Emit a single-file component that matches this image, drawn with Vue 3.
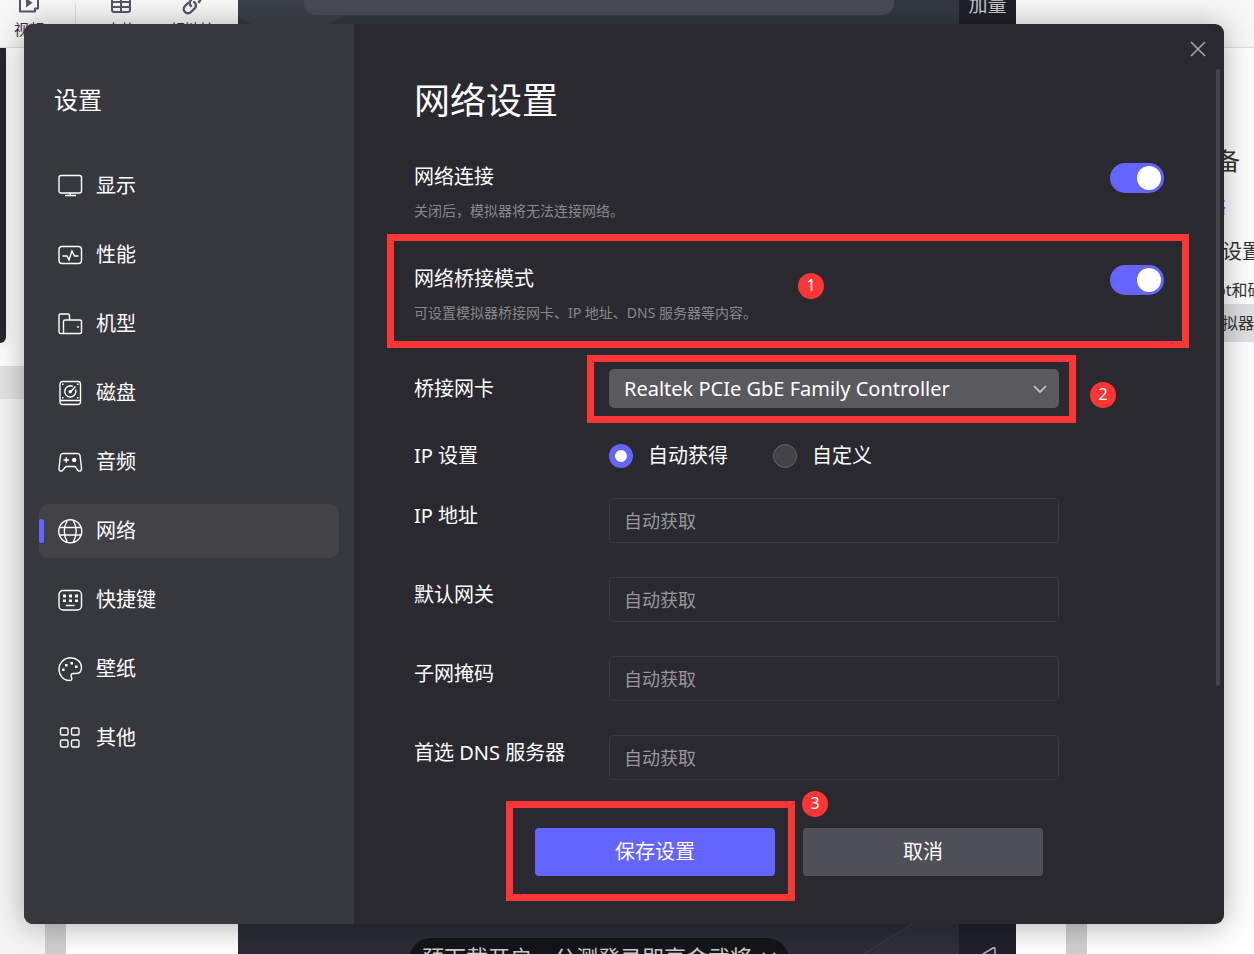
<template>
  <div class="desktop">
    <div class="backdrop" aria-hidden="true">
      <div class="toolbar">
        <div class="tool tool-video">
          <svg width="24" height="24" viewBox="0 0 24 24" fill="none" stroke="#55566a" stroke-width="2">
            <path d="M6 3H3v17.500h15v-3h3V7h-3V3" stroke-linejoin="round" />
            <path d="M9 7v9.500l6.500-4.700z" fill="#55566a" stroke="none" />
          </svg>
          <span>视频</span>
        </div>
        <div class="tool tool-table">
          <svg width="24" height="24" viewBox="0 0 24 24" fill="none" stroke="#55566a" stroke-width="2">
            <rect x="3" y="3" width="18" height="18" rx="2" />
            <path d="M3 11h18M3 16h18M12 8v13M3 8h18" />
          </svg>
          <span>表格</span>
        </div>
        <div class="tool tool-link">
          <svg width="24" height="24" viewBox="0 0 24 24" fill="none" stroke="#55566a" stroke-width="2.400" stroke-linecap="round">
            <path d="M7 12l-3 3a4 4 0 0 0 6 6l4-4a4 4 0 0 0-1-6" />
            <path d="M10 15a4 4 0 0 1 0-6M18 11l2-3" />
          </svg>
          <span>超链接</span>
        </div>
      </div>
      <div class="thumb"></div>
      <div class="band"></div>
      <div class="gutter"></div>
      <div class="page"></div>
      <div class="emulator">
        <div class="screen">
          <svg class="rays" viewBox="0 0 721 954" preserveAspectRatio="none">
            <path d="M0 16 14 24H92L132 0H0z" fill="#3c404a" />
            <path d="M628 954 674 924H721V954z" fill="#2d3038" />
            <path d="M626 954 674 924" stroke="#3b3f48" />
          </svg>
          <div class="search"></div>
          <div class="notice">预下载开启，公测登录即享金武将
            <svg width="14" height="10" viewBox="0 0 14 10" fill="none" stroke="#ccc" stroke-width="2"><path d="M1 2l6 6 6-6" /></svg>
          </div>
        </div>
        <div class="rail">
          <span>加量</span>
          <svg width="24" height="24" viewBox="0 0 24 24" fill="none" stroke="#b9b5cf" stroke-width="1.500" stroke-linejoin="round">
            <path d="M2 11 17 2q2-1 2 1v18l-6-5z" />
          </svg>
        </div>
      </div>
      <div class="divider"></div>
      <div class="outline">
        <p class="outline-title">设备</p>
        <p class="outline-link">络</p>
        <p class="outline-head">设置</p>
        <p class="outline-item">root和硬件</p>
        <p class="outline-item current">模拟器</p>
      </div>
    </div>

    <div class="dialog" role="dialog" aria-label="设置">
      <aside class="sidebar">
        <h2 class="sidebar-title">设置</h2>
        <nav class="menu">
          <button
            v-for="item in menu"
            :key="item.name"
            type="button"
            class="menu-item"
            :class="{ active: item.name === current }"
            @click="current = item.name"
          >
            <svg class="menu-icon" viewBox="0 0 24 24">
              <path :d="item.line" />
              <path v-if="item.dots" class="dots" :d="item.dots" />
            </svg>
            <span>{{ item.name }}</span>
          </button>
        </nav>
      </aside>

      <main class="content">
        <button type="button" class="close" aria-label="关闭">
          <svg width="16" height="16" viewBox="0 0 16 16" fill="none" stroke="#a9a6bb" stroke-width="1.500">
            <path d="M1 1l14 14M15 1L1 15" />
          </svg>
        </button>
        <div class="scrollbar"></div>

        <h1 class="page-title">网络设置</h1>

        <div class="switch-row">
          <div>
            <label for="connect" class="label">网络连接</label>
            <p class="hint">关闭后，模拟器将无法连接网络。</p>
          </div>
          <input id="connect" v-model="connect" type="checkbox" role="switch" class="switch" />
        </div>

        <div class="switch-row">
          <div>
            <label for="bridge" class="label">网络桥接模式</label>
            <p class="hint">可设置模拟器桥接网卡、IP 地址、DNS 服务器等内容。</p>
          </div>
          <input id="bridge" v-model="bridge" type="checkbox" role="switch" class="switch" />
          <div class="mark mark-bridge"></div>
          <span class="step step-bridge">1</span>
        </div>

        <form class="form" @submit.prevent>
          <div class="field field-adapter">
            <label for="adapter" class="label">桥接网卡</label>
            <div class="select-wrap">
              <select id="adapter" v-model="adapter" class="select">
                <option>Realtek PCIe GbE Family Controller</option>
              </select>
              <svg class="arrow" width="14" height="10" viewBox="0 0 14 10" fill="none" stroke="#c8c8cc" stroke-width="1.600">
                <path d="M1 2l6 6 6-6" />
              </svg>
              <div class="mark mark-adapter"></div>
              <span class="step step-adapter">2</span>
            </div>
          </div>

          <div class="field field-mode" role="radiogroup" aria-labelledby="mode-label">
            <span id="mode-label" class="label">IP 设置</span>
            <div class="radios">
              <label class="radio"><input v-model="mode" type="radio" name="mode" value="auto" />自动获得</label>
              <label class="radio"><input v-model="mode" type="radio" name="mode" value="custom" />自定义</label>
            </div>
          </div>

          <div v-for="field in fields" :key="field.id" class="field">
            <label :for="field.id" class="label">{{ field.label }}</label>
            <input :id="field.id" v-model="field.value" type="text" class="text-input" placeholder="自动获取" />
          </div>

          <div class="actions">
            <div class="save-wrap">
              <button type="submit" class="button primary">保存设置</button>
              <div class="mark mark-save"></div>
              <span class="step step-save">3</span>
            </div>
            <button type="button" class="button">取消</button>
          </div>
        </form>
      </main>
    </div>
  </div>
</template>

<script setup>
import { ref } from 'vue'

const current = ref('网络')
const connect = ref(true)
const bridge = ref(true)
const adapter = ref('Realtek PCIe GbE Family Controller')
const mode = ref('auto')

const fields = ref([
  { id: 'ip', label: 'IP 地址', value: '' },
  { id: 'gateway', label: '默认网关', value: '' },
  { id: 'mask', label: '子网掩码', value: '' },
  { id: 'dns', label: '首选 DNS 服务器', value: '' }
])

const menu = [
  {
    name: '显示',
    line: 'M3 1.500h18.500a2 2 0 0 1 2 2V17a2 2 0 0 1-2 2H3a2 2 0 0 1-2-2V3.500a2 2 0 0 1 2-2zM12.250 19v2.500M7 21.500h11'
  },
  {
    name: '性能',
    line: 'M4 3.500h16.500a3 3 0 0 1 3 3v11a3 3 0 0 1-3 3H4a3 3 0 0 1-3-3v-11a3 3 0 0 1 3-3zM4.500 13H9l2 4L14 8l2.500 5h4'
  },
  {
    name: '机型',
    line: 'M5.500 21.500H2.500a1.500 1.500 0 0 1-1.500-1.500V3.500A1.500 1.500 0 0 1 2.500 2H10a1.500 1.500 0 0 1 1.500 1.500V8M7 8H22a1.500 1.500 0 0 1 1.500 1.500V20a1.500 1.500 0 0 1-1.500 1.500H5.500V9.500A1.500 1.500 0 0 1 7 8M20 14v2'
  },
  {
    name: '磁盘',
    line: 'M4.500 .5h15.500a2.500 2.500 0 0 1 2.500 2.500v18a2.500 2.500 0 0 1-2.500 2.500H4.500A2.500 2.500 0 0 1 2 21v-18A2.500 2.500 0 0 1 4.500 .5zM2 19.500h20.500M15 5.500a5.600 5.600 0 1 0 2.600 3M12 11.500l5.500-6',
    dots: 'M4 2.500h1.500v1.500H4zM19 2.500h1.500v1.500H19zM4 16h1.500v1.500H4zM19 16h1.500v1.500H19zM10.500 10.800a1.700 1.700 0 1 0 3.400 0a1.700 1.700 0 1 0-3.400 0z'
  },
  {
    name: '音频',
    line: 'M5 3.500h14.500a2.500 2.500 0 0 1 2.500 2L23.500 18c.300 4-3 3.500-4 2l-1.500-2.500a2 2 0 0 0-2-1H9a2 2 0 0 0-2 1L5 20c-1 1.500-4.300 2-4-2L2.500 5.500a2.500 2.500 0 0 1 2.500-2zM5.500 10h5.500M8.250 7.250v5.500',
    dots: 'M14 10a2.200 2.200 0 1 0 4.400 0a2.200 2.200 0 1 0-4.400 0z'
  },
  {
    name: '网络',
    line: 'M12.250 .75a11.500 11.500 0 1 0 0 23a11.500 11.500 0 1 0 0-23zM9.500 1C5.500 8 5.500 16.500 9.500 23.500M15 1c4 7 4 15.500 0 22.500M2 8.500h20.500M2 16h20.500'
  },
  {
    name: '快捷键',
    line: 'M5 2.500h14.500a4 4 0 0 1 4 4V18a4 4 0 0 1-4 4H5a4 4 0 0 1-4-4V6.500a4 4 0 0 1 4-4zM8 17.500h8.500',
    dots: 'M5 6.500h3v3H5zM11 6.500h3v3h-3zM17 6.500h3v3h-3zM5 11.500h3v2.500H5zM11 11.500h3v2.500h-3zM17 11.500h3v2.500h-3z'
  },
  {
    name: '壁纸',
    line: 'M12.500 .75C18.500 .75 23.500 5 23.500 10.500c0 5-3 6-5.500 6h-3c-2 0-2.500 2-1.500 4c1 1.500 0 3-2 3C5 23.500 1 18 1 12.500C1 6 6 .75 12.500 .75z',
    dots: 'M4 11.500h2.500v2.500H4zM7 7h2.500v2.500H7zM12.500 5H15v2.500h-2.500zM17 8.500h2.500v2.500H17z'
  },
  {
    name: '其他',
    line: 'M4 2h4.500a1.500 1.500 0 0 1 1.500 1.500V7.500a1.500 1.500 0 0 1-1.500 1.500H4A1.500 1.500 0 0 1 2.500 7.500v-4A1.500 1.500 0 0 1 4 2zM15 2h4.500a1.500 1.500 0 0 1 1.500 1.500V7.500a1.500 1.500 0 0 1-1.500 1.500H15a1.500 1.500 0 0 1-1.500-1.500v-4A1.500 1.500 0 0 1 15 2zM4 14h4.500A1.500 1.500 0 0 1 10 15.500v4a1.500 1.500 0 0 1-1.500 1.500H4A1.500 1.500 0 0 1 2.500 19.500v-4A1.500 1.500 0 0 1 4 14zM15 14h4.500A1.500 1.500 0 0 1 21 15.500v4a1.500 1.500 0 0 1-1.500 1.500H15a1.500 1.500 0 0 1-1.500-1.500v-4A1.500 1.500 0 0 1 15 14z'
  }
]
</script>

<style>
body {
  margin: 0;
  background: #fff;
}
</style>

<style scoped>
* {
  box-sizing: border-box;
}

h1, h2, p {
  margin: 0;
  font-weight: 400;
}

button, input, select {
  margin: 0;
  font: inherit;
  color: inherit;
}

.desktop {
  position: relative;
  min-height: 100vh;
  padding: 24px 30px 30px 24px;
  overflow: hidden;
  background: #fff;
  color: #fff;
  font-family: "Noto Sans", "Noto Sans CJK SC", sans-serif;
  font-size: 20px;
  line-height: 28px;
}

/* windows behind the dialog */
.backdrop {
  position: absolute;
  inset: 0;
  overflow: hidden;
  color: #333;
}

.toolbar {
  position: absolute;
  top: 0;
  left: 0;
  right: 0;
  height: 48px;
  background: #f8f8f8;
  border-bottom: 1px solid #ddd;
}

.tool {
  position: absolute;
  top: -9px;
  display: flex;
  flex-direction: column;
  align-items: center;
  gap: 4px;
  font-size: 15px;
  line-height: 20px;
}

.tool-video {
  left: 14px;
}

.tool-table {
  left: 106px;
}

.tool-link {
  left: 170px;
}

.divider {
  position: absolute;
  top: 4px;
  left: 75px;
  width: 1px;
  height: 30px;
  background: #ddd;
}

.thumb {
  position: absolute;
  top: 48px;
  left: 0;
  width: 6px;
  height: 295px;
  border-radius: 0 0 6px 0;
  background: #26262d;
  box-shadow: 0 2px 12px rgba(0, 0, 0, 0.15);
}

.band {
  position: absolute;
  top: 366px;
  left: 0;
  width: 45px;
  height: 33px;
  background: #e4e4e4;
}

.gutter {
  position: absolute;
  top: 399px;
  bottom: 0;
  left: 0;
  width: 66px;
  background: #f5f5f5;
  border-right: 21px solid #d0d0d0;
}

.page {
  position: absolute;
  top: 48px;
  bottom: 0;
  left: 1066px;
  width: 21px;
  background: #d0d0d0;
}

.emulator {
  position: absolute;
  top: 0;
  bottom: 0;
  left: 238px;
  width: 778px;
  display: flex;
}

.screen {
  position: relative;
  flex: 1;
  overflow: hidden;
  background: linear-gradient(#343842, #2a2d37);
}

.rays {
  width: 100%;
  height: 100%;
}

.search {
  position: absolute;
  top: -30px;
  left: 66px;
  width: 590px;
  height: 45px;
  border-radius: 12px;
  background: #4a4c55;
}

.notice {
  position: absolute;
  bottom: -36px;
  left: 171px;
  width: 380px;
  height: 52px;
  padding: 5px 13px;
  display: flex;
  align-items: flex-start;
  justify-content: space-between;
  border-radius: 22px;
  background: #141519;
  color: #ccc;
  font-size: 22px;
  line-height: 28px;
  white-space: nowrap;
}

.notice svg {
  margin-top: 8px;
}

.rail {
  width: 57px;
  padding-bottom: 8px;
  display: flex;
  flex-direction: column;
  align-items: center;
  justify-content: space-between;
  background: #20202a;
  color: #ccc;
  font-size: 19px;
  line-height: 10px;
}

.rail svg {
  margin-bottom: -24px;
}

.outline {
  position: absolute;
  top: 147px;
  right: 0;
  width: 62px;
  white-space: nowrap;
  color: #333;
}

.outline-title {
  padding-bottom: 18px;
  font-size: 24px;
}

.outline-link {
  padding: 0 16px;
  color: #3a50b8;
  font-size: 18px;
}

.outline-head {
  padding: 17px 30px 10px;
}

.outline-item {
  padding-left: 8px;
  font-size: 16px;
}

.outline-item.current {
  padding: 5px 14px;
  background: #e0e0e3;
}

/* dialog */
.dialog {
  position: relative;
  display: flex;
  min-height: calc(100vh - 54px);
  border-radius: 9px;
  overflow: hidden;
  background: #2a292f;
  box-shadow: 0 2px 32px rgba(0, 0, 0, 0.32);
}

.sidebar {
  flex: 0 0 330px;
  padding: 58px 15px;
  background: #37383d;
}

.sidebar-title {
  padding-left: 15px;
  margin-bottom: 41px;
  font-size: 24px;
  line-height: 36px;
}

.menu {
  display: flex;
  flex-direction: column;
  gap: 15px;
}

.menu-item {
  position: relative;
  display: flex;
  align-items: center;
  gap: 14px;
  height: 54px;
  padding: 0 19px;
  border: none;
  border-radius: 9px;
  background: transparent;
  text-align: left;
  cursor: pointer;
}

.menu-item.active {
  background: #434247;
}

.menu-item.active::before {
  content: "";
  position: absolute;
  left: 0;
  width: 5px;
  height: 24px;
  border-radius: 2px;
  background: #6464ff;
}

.menu-icon {
  width: 24px;
  height: 24px;
  overflow: visible;
  fill: none;
  stroke: #fff;
  stroke-width: 1.4;
}

.menu-icon .dots {
  fill: #fff;
  stroke: none;
}

.content {
  position: relative;
  flex: 1;
  min-width: 0;
  padding: 51px 60px 48px;
}

.close {
  position: absolute;
  top: 13px;
  right: 14px;
  width: 24px;
  height: 24px;
  padding: 4px;
  border: none;
  background: none;
  line-height: 0;
  cursor: pointer;
}

.scrollbar {
  position: absolute;
  top: 45px;
  right: 4px;
  width: 4px;
  height: 617px;
  border-radius: 2px;
  background: #45444b;
}

.page-title {
  margin-bottom: 36px;
  font-size: 36px;
  line-height: 52px;
}

.switch-row {
  position: relative;
  display: flex;
  align-items: flex-start;
  justify-content: space-between;
  margin-bottom: 44px;
}

.label {
  display: block;
}

.hint {
  margin-top: 10px;
  color: #88888c;
  font-size: 14px;
  line-height: 20px;
}

.switch {
  appearance: none;
  width: 54px;
  height: 30px;
  padding: 3px;
  border-radius: 15px;
  background: #55555c;
  cursor: pointer;
}

.switch::before {
  content: "";
  display: block;
  width: 24px;
  height: 24px;
  border-radius: 50%;
  background: #fff;
}

.switch:checked {
  background: #6464ff;
}

.switch:checked::before {
  margin-left: auto;
}

.form {
  padding-top: 2px;
}

.field {
  display: grid;
  grid-template-columns: 195px minmax(0, 450px);
  align-items: start;
  margin-bottom: 34px;
}

.field .label {
  padding-top: 4px;
}

.field-adapter {
  align-items: center;
}

.field-mode {
  margin-bottom: 28px;
}

.field-adapter .label,
.field-mode .label {
  padding-top: 0;
}

.select-wrap {
  position: relative;
}

.select {
  appearance: none;
  display: block;
  width: 100%;
  height: 39px;
  padding: 0 40px 0 15px;
  border: none;
  border-radius: 5px;
  background: #5a595e;
}

.arrow {
  position: absolute;
  top: 15px;
  right: 12px;
  pointer-events: none;
}

.radios {
  display: flex;
  gap: 45px;
}

.radio {
  display: flex;
  align-items: center;
  gap: 15px;
}

.radio input {
  appearance: none;
  width: 24px;
  height: 24px;
  border: 1px solid #66666b;
  border-radius: 50%;
  background: #434247;
}

.radio input:checked {
  border: 6px solid #6464ff;
  background: #fff;
}

.text-input {
  width: 100%;
  height: 45px;
  padding: 0 14px;
  border: 1px solid #38373d;
  border-radius: 4px;
  background: transparent;
  font-size: 18px;
}

.text-input::placeholder {
  color: #98989c;
  opacity: 1;
}

.actions {
  display: flex;
  justify-content: center;
  gap: 28px;
  margin-top: 48px;
}

.save-wrap {
  position: relative;
}

.button {
  width: 240px;
  height: 48px;
  border: none;
  border-radius: 4px;
  background: #4f4f57;
  cursor: pointer;
}

.button.primary {
  background: #6464ff;
}

/* red guide boxes and step numbers */
.mark {
  position: absolute;
  border: 7px solid #fc3636;
  pointer-events: none;
}

.mark-bridge {
  inset: -31px -25px -25px -27px;
}

.mark-adapter {
  inset: -14px -17px -15px -22px;
}

.mark-save {
  inset: -27px -20px -25px -29px;
}

.step {
  position: absolute;
  width: 26px;
  height: 26px;
  border-radius: 50%;
  background: #fc3636;
  font-size: 16px;
  line-height: 24px;
  text-align: center;
}

.step-bridge {
  top: 8px;
  left: 384px;
}

.step-adapter {
  top: 13px;
  right: -57px;
}

.step-save {
  top: -37px;
  left: 267px;
}
</style>
